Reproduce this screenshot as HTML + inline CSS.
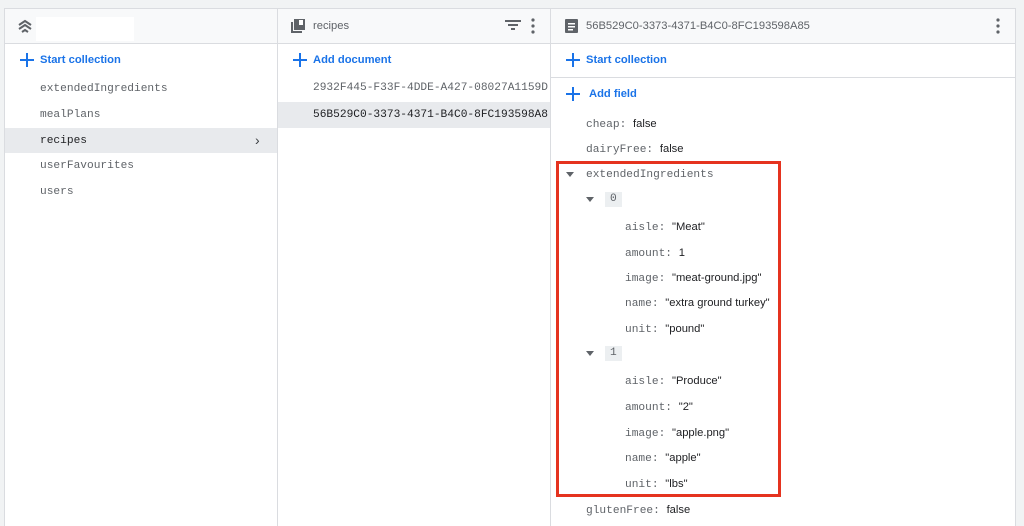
<!DOCTYPE html>
<html><head><style>
*{margin:0;padding:0;box-sizing:border-box}
body{width:1024px;height:526px;background:#f1f3f4;position:relative;overflow:hidden;font-family:"Liberation Sans",sans-serif}
.a{position:absolute;white-space:nowrap;height:20px;line-height:20px}
.m{font-family:"Liberation Mono",monospace;font-size:11.2px;color:#5f6368}
.mb{font-family:"Liberation Mono",monospace;font-size:11.2px;color:#202124}
.v{font-family:"Liberation Sans",sans-serif;font-size:11.2px;color:#202124}
.bl{color:#1a73e8;font-size:11.2px;font-weight:bold}
.pl{position:absolute;width:14px;height:14px}
.pl:before{content:"";position:absolute;left:6px;top:0;width:2px;height:14px;background:#1a73e8}
.pl:after{content:"";position:absolute;top:6px;left:0;width:14px;height:2px;background:#1a73e8}
.tri{position:absolute;width:0;height:0;border-left:4px solid transparent;border-right:4px solid transparent;border-top:5px solid #5f6368}
.idx{position:absolute;background:#eceff1;color:#5f6368;font-family:"Liberation Mono",monospace;font-size:11.2px;height:15px;line-height:15px;padding:0 5px}
</style></head><body>
<div style="position:absolute;left:4px;top:8px;width:1012px;height:518px;background:#fff;border:1px solid #dadce0;border-bottom:none"></div>
<div style="position:absolute;left:5px;top:9px;width:1010px;height:35px;background:#f8f9fa;border-bottom:1px solid #dadce0"></div>
<div style="position:absolute;left:277px;top:9px;width:1px;height:517px;background:#dadce0"></div>
<div style="position:absolute;left:550px;top:9px;width:1px;height:517px;background:#dadce0"></div>
<div style="position:absolute;left:551px;top:77px;width:464px;height:1px;background:#dadce0"></div>

<!-- panel1 -->
<svg style="position:absolute;left:17px;top:19px" width="16" height="16" viewBox="0 0 16 16"><path d="M2 6 L8 2 L14 6 M2 10 L8 6 L14 10 M5 13 L8 11 L11 13" fill="none" stroke="#5f6368" stroke-width="2"/></svg>
<div style="position:absolute;left:36px;top:17px;width:98px;height:24px;background:#fff"></div>
<div class="pl" style="left:20px;top:53px"></div><div class="a bl" style="left:40px;top:50px">Start collection</div>
<div class="a m" style="left:40px;top:79px">extendedIngredients</div>
<div class="a m" style="left:40px;top:105px">mealPlans</div>
<div style="position:absolute;left:5px;top:128px;width:272px;height:25px;background:#e8eaed"></div>
<div class="a mb" style="left:40px;top:131px">recipes</div>
<div class="a" style="left:255px;top:130px;font-size:14px;color:#3c4043">&#8250;</div>
<div class="a m" style="left:40px;top:156px">userFavourites</div>
<div class="a m" style="left:40px;top:182px">users</div>

<!-- panel2 -->
<svg style="position:absolute;left:290px;top:18px" width="16" height="16" viewBox="0 0 16 16"><rect x="4" y="1" width="11" height="11" fill="#5f6368"/><rect x="9" y="2" width="4" height="5" fill="#fff"/><path d="M2 4 V14 H12" fill="none" stroke="#5f6368" stroke-width="2"/></svg>
<div class="a" style="left:313px;top:16px;font-size:11.2px;color:#5f6368">recipes</div>
<svg style="position:absolute;left:505px;top:19px" width="16" height="12"><rect x="0" y="1" width="16" height="2" fill="#5f6368"/><rect x="3" y="5" width="10" height="2" fill="#5f6368"/><rect x="6" y="9" width="4" height="2" fill="#5f6368"/></svg>
<svg style="position:absolute;left:531px;top:18px" width="4" height="16"><circle cx="2" cy="2" r="1.6" fill="#5f6368"/><circle cx="2" cy="8" r="1.6" fill="#5f6368"/><circle cx="2" cy="14" r="1.6" fill="#5f6368"/></svg>
<div class="pl" style="left:293px;top:53px"></div><div class="a bl" style="left:313px;top:50px">Add document</div>
<div style="position:absolute;left:278px;top:75px;width:272px;height:450px;overflow:hidden">
<div class="a m" style="left:35px;top:3px">2932F445-F33F-4DDE-A427-08027A1159D</div>
<div style="position:absolute;left:0;top:27px;width:272px;height:26px;background:#e8eaed"></div>
<div class="a mb" style="left:35px;top:30px">56B529C0-3373-4371-B4C0-8FC193598A8</div>
</div>

<!-- panel3 -->
<svg style="position:absolute;left:565px;top:19px" width="13" height="14"><rect width="13" height="14" rx="1" fill="#5f6368"/><rect x="3" y="4" width="7" height="1.5" fill="#fff"/><rect x="3" y="7" width="7" height="1.5" fill="#fff"/><rect x="3" y="10" width="5" height="1.5" fill="#fff"/></svg>
<div class="a" style="left:586px;top:16px;font-size:11.2px;color:#5f6368">56B529C0-3373-4371-B4C0-8FC193598A85</div>
<svg style="position:absolute;left:996px;top:18px" width="4" height="16"><circle cx="2" cy="2" r="1.6" fill="#5f6368"/><circle cx="2" cy="8" r="1.6" fill="#5f6368"/><circle cx="2" cy="14" r="1.6" fill="#5f6368"/></svg>
<div class="pl" style="left:566px;top:53px"></div><div class="a bl" style="left:586px;top:50px">Start collection</div>
<div class="pl" style="left:566px;top:87px"></div><div class="a bl" style="left:589px;top:84px">Add field</div>
<div class="a" style="left:586px;top:113px"><span class="m">cheap: </span><span class="v">false</span></div>
<div class="a" style="left:586px;top:138px"><span class="m">dairyFree: </span><span class="v">false</span></div>
<div class="tri" style="left:566px;top:172px"></div>
<div class="a m" style="left:586px;top:165px">extendedIngredients</div>
<div class="tri" style="left:586px;top:197px"></div><div class="idx" style="left:605px;top:192px">0</div>
<div class="a" style="left:625px;top:216px"><span class="m">aisle: </span><span class="v">"Meat"</span></div>
<div class="a" style="left:625px;top:242px"><span class="m">amount: </span><span class="v">1</span></div>
<div class="a" style="left:625px;top:267px"><span class="m">image: </span><span class="v">"meat-ground.jpg"</span></div>
<div class="a" style="left:625px;top:292px"><span class="m">name: </span><span class="v">"extra ground turkey"</span></div>
<div class="a" style="left:625px;top:318px"><span class="m">unit: </span><span class="v">"pound"</span></div>
<div class="tri" style="left:586px;top:351px"></div><div class="idx" style="left:605px;top:346px">1</div>
<div class="a" style="left:625px;top:370px"><span class="m">aisle: </span><span class="v">"Produce"</span></div>
<div class="a" style="left:625px;top:396px"><span class="m">amount: </span><span class="v">"2"</span></div>
<div class="a" style="left:625px;top:422px"><span class="m">image: </span><span class="v">"apple.png"</span></div>
<div class="a" style="left:625px;top:447px"><span class="m">name: </span><span class="v">"apple"</span></div>
<div class="a" style="left:625px;top:473px"><span class="m">unit: </span><span class="v">"lbs"</span></div>
<div class="a" style="left:586px;top:499px"><span class="m">glutenFree: </span><span class="v">false</span></div>
<div style="position:absolute;left:556px;top:161px;width:225px;height:336px;border:3px solid #e5331f"></div>
</body></html>
